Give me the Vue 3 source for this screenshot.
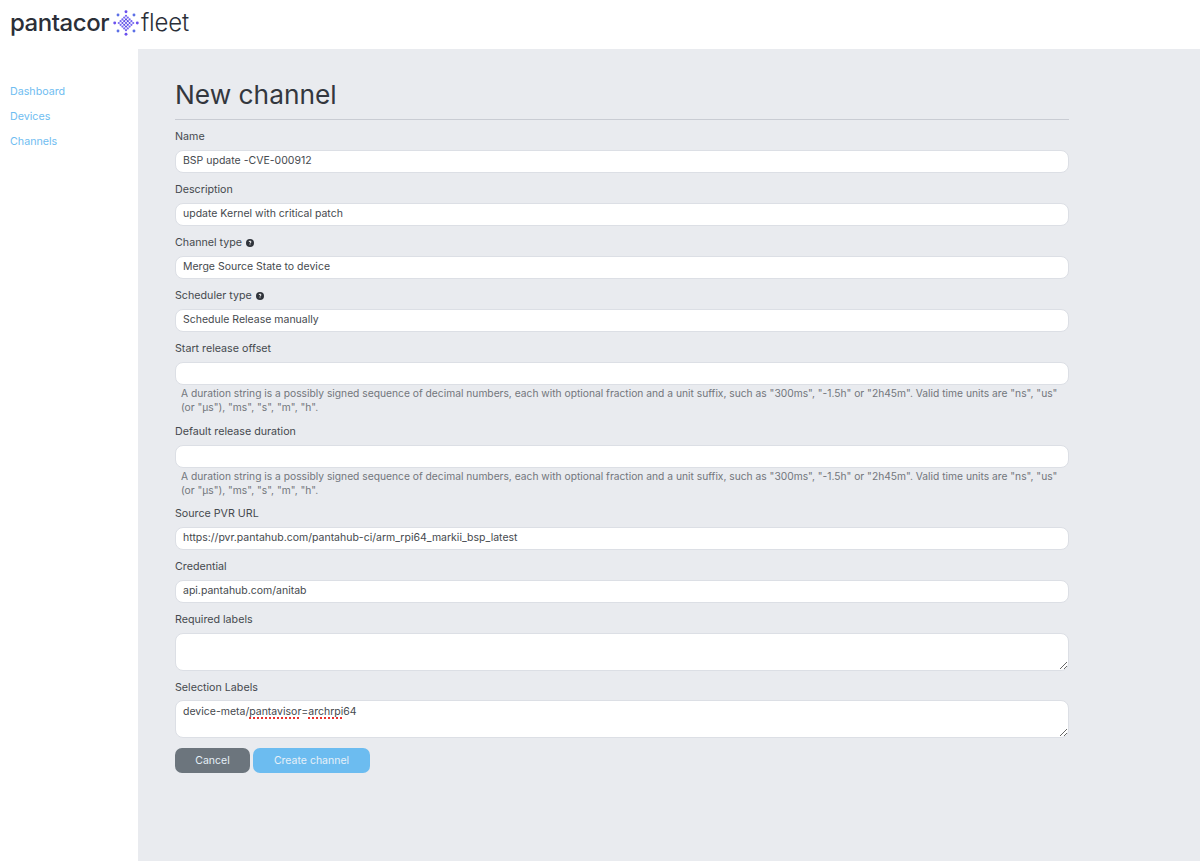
<script setup>
const help = 'A duration string is a possibly signed sequence of decimal numbers, each with optional fraction and a unit suffix, such as "300ms", "-1.5h" or "2h45m". Valid time units are "ns", "us" (or "µs"), "ms", "s", "m", "h".'
const fields = [
  { label: 'Name', value: 'BSP update -CVE-000912' },
  { label: 'Description', value: 'update Kernel with critical patch' },
  { label: 'Channel type', value: 'Merge Source State to device', tip: true },
  { label: 'Scheduler type', value: 'Schedule Release manually', tip: true },
  { label: 'Start release offset', value: '', help },
  { label: 'Default release duration', value: '', help },
  { label: 'Source PVR URL', value: 'https://pvr.pantahub.com/pantahub-ci/arm_rpi64_markii_bsp_latest' },
  { label: 'Credential', value: 'api.pantahub.com/anitab' }
]
const links = ['Dashboard', 'Devices', 'Channels']

// Logo mark: a rotated 5x5 lattice with a ring of sparse outer dots
const dots = []
for (let i = -4; i <= 4; i++) {
  for (let j = -4; j <= 4; j++) {
    if ((i + j) % 2 === 0 && Math.abs(i) + Math.abs(j) <= 4) {
      dots.push({ x: 13 + i * 1.8, y: 13 + j * 1.8, r: 1.1, c: Math.abs(i) + Math.abs(j) > 2 ? '#7466f0' : '#5f50e6' })
    }
  }
}
for (let k = 0; k < 8; k++) {
  const a = (k * Math.PI) / 4
  dots.push({ x: 13 + Math.cos(a) * 11.3, y: 13 + Math.sin(a) * 11.3, r: 1.45, c: k % 2 ? '#5c70e6' : '#6a50ee' })
}
</script>

<template>
  <div class="page">
    <header class="top">
      <span class="brand">pantacor</span>
      <svg class="mark" width="26" height="26" viewBox="0 0 26 26" aria-hidden="true">
        <circle v-for="(d, i) in dots" :key="i" :cx="d.x" :cy="d.y" :r="d.r" :fill="d.c" />
      </svg>
      <span class="product">fleet</span>
    </header>
    <div class="body">
      <nav class="side">
        <a v-for="l in links" :key="l" class="link" href="#">{{ l }}</a>
      </nav>
      <main class="main">
        <h1 class="title">New channel</h1>
        <form class="form" @submit.prevent>
          <div v-for="f in fields" :key="f.label" class="field" :class="{ 'has-help': f.help }">
            <div class="label">
              {{ f.label }}
              <svg v-if="f.tip" class="tip" width="8" height="8" viewBox="0 0 16 16" aria-hidden="true">
                <circle cx="8" cy="8" r="8" fill="#2f333a" />
                <path d="M5.4 6.2c0-1.5 1.1-2.5 2.7-2.5s2.6.9 2.6 2.2c0 1.9-2.1 1.9-2.1 3.5H7.2c0-2.4 1.9-2.3 1.9-3.4 0-.5-.4-.9-1-.9-.7 0-1.1.4-1.1 1.1z" fill="#fff" />
                <rect x="7.2" y="10.6" width="1.6" height="1.7" fill="#fff" />
              </svg>
            </div>
            <input class="input" type="text" :value="f.value" spellcheck="false" />
            <p v-if="f.help" class="help">{{ f.help }}</p>
          </div>
          <div class="field tight">
            <div class="label">Required labels</div>
            <div class="area"></div>
          </div>
          <div class="field">
            <div class="label">Selection Labels</div>
            <div class="area">device-meta/<span class="typo">pantavisor</span>=<span class="typo">archrpi</span>64</div>
          </div>
          <div class="actions">
            <button class="btn cancel" type="button">Cancel</button>
            <button class="btn create" type="submit">Create channel</button>
          </div>
        </form>
      </main>
    </div>
  </div>
</template>

<style scoped>
.page {
  display: flex;
  flex-direction: column;
  min-height: 861px;
  background: #fff;
  font-family: Inter, "Noto Sans", "Liberation Sans", sans-serif;
  color: #3c4046;
}
.top {
  display: flex;
  align-items: center;
  height: 49px;
  padding: 0 0 5px 10px;
  box-sizing: border-box;
}
.brand {
  font-size: 24px;
  font-weight: 500;
  letter-spacing: -0.45px;
  color: #2b2f38;
  width: 103px;
}
.mark {
  flex: none;
  margin-top: 2px;
}
.product {
  margin-left: 2px;
  font-size: 24px;
  font-weight: 300;
  letter-spacing: -0.2px;
  color: #2b2f38;
}
.body {
  display: flex;
  flex: 1;
}
.side {
  width: 138px;
  flex: none;
  display: flex;
  flex-direction: column;
  gap: 11px;
  padding: 36px 0 0 10px;
  box-sizing: border-box;
}
.link {
  font-size: 10.7px;
  line-height: 14px;
  color: #6fbdf1;
  text-decoration: none;
}
.main {
  flex: 1;
  background: #e9ebef;
  padding: 0 131px 0 37px;
}
.title {
  margin: 0;
  height: 71px;
  box-sizing: border-box;
  padding-top: 26px;
  border-bottom: 1px solid #c9ccd3;
  font-size: 26.3px;
  line-height: 40px;
  font-weight: 400;
  color: #33373e;
}
.form {
  padding-top: 9px;
}
.field {
  margin-bottom: 9px;
}
.field.has-help {
  margin-bottom: 9.5px;
}
.field.tight + .field .label {
  margin-bottom: 4px;
}
.label {
  display: flex;
  align-items: center;
  gap: 4px;
  height: 16px;
  margin-bottom: 5px;
  font-size: 10.7px;
  line-height: 14px;
  color: #45494e;
}
.tip {
  flex: none;
}
.input,
.area {
  display: block;
  width: 100%;
  box-sizing: border-box;
  background: #fff;
  border: 1px solid #dcdfe5;
  border-radius: 8px;
  font: inherit;
  font-size: 10.5px;
  color: #45494e;
  padding: 0 7px;
  outline: none;
}
.input {
  height: 23px;
  padding-bottom: 2px;
}
.area {
  height: 38px;
  padding-top: 4px;
  line-height: 14px;
  overflow: auto;
  resize: vertical;
}
.typo {
  text-decoration: underline dotted #e8322e 1.5px;
  text-decoration-skip-ink: none;
  text-underline-offset: 2px;
}
.help {
  margin: 1px 0 0;
  padding-left: 6px;
  font-size: 10.25px;
  line-height: 14px;
  color: #72767c;
}
.actions {
  display: flex;
  gap: 3px;
  margin-top: 10px;
}
.btn {
  height: 25px;
  border: 0;
  border-radius: 7px;
  font: inherit;
  font-size: 10.5px;
  color: #e6f0f8;
  padding: 0;
}
.cancel {
  width: 75px;
  background: #6c757d;
}
.create {
  width: 117px;
  background: #6cbcf0;
}
</style>
